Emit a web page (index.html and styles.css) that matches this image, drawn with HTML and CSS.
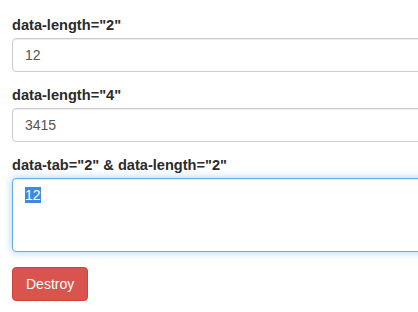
FILE: index.html
```html
<!DOCTYPE html>
<html lang="en">

<head>
    <meta charset="UTF-8">
    <meta name="viewport" content="width=device-width, initial-scale=1.0">
    <title>Input Length Demo</title>
    <link rel="stylesheet" href="styles.css">
</head>

<body>
    <div class="container">
        <div class="form-group">
            <label class="control-label">data-length="2"</label>
            <input class="form-control" type="text" value="12">
        </div>
        <div class="form-group">
            <label class="control-label">data-length="4"</label>
            <input class="form-control" type="text" value="3415">
        </div>
        <div class="form-group">
            <label class="control-label">data-tab="2" &amp; data-length="2"</label>
            <div class="form-control textarea focused"><span class="selected">12</span></div>
        </div>
        <button class="btn btn-danger" type="button">Destroy</button>
    </div>
</body>

</html>
```

FILE: styles.css
```css
html,
body {
    overflow: hidden;
}

body {
    margin: 0;
    font-family: "Liberation Sans", Arial, sans-serif;
    font-size: 14px;
    line-height: 20px;
    color: #333;
    background: #fff;
}

.container {
    width: 640px;
    padding: 17px 12px 0;
}

.form-group {
    margin-bottom: 15px;
}

.control-label {
    display: block;
    font-size: 14.6px;
    font-weight: bold;
    line-height: 17px;
    margin-bottom: 4px;
    color: #2b2b2b;
}

.form-control {
    display: block;
    box-sizing: border-box;
    width: 100%;
    height: 34px;
    margin: 0;
    padding: 6px 12px;
    font-family: inherit;
    font-size: 14px;
    line-height: 20px;
    color: #555;
    background: #fff;
    border: 1px solid #ccc;
    border-radius: 4px;
    box-shadow: inset 0 1px 1px rgba(0, 0, 0, 0.075);
}

.textarea {
    height: 74px;
}

.focused {
    border-color: #66afe9;
    box-shadow: inset 0 1px 1px rgba(0, 0, 0, 0.075), 0 0 8px rgba(102, 175, 233, 0.6);
}

.selected {
    background: #3b8be0;
    color: #fff;
}

.btn {
    display: inline-block;
    padding: 6px 13px;
    font-family: inherit;
    font-size: 14px;
    line-height: 20px;
    border: 1px solid transparent;
    border-radius: 4px;
    cursor: pointer;
}

.btn-danger {
    color: #fff;
    background: #d9534f;
    border-color: #d43f3a;
}
```
